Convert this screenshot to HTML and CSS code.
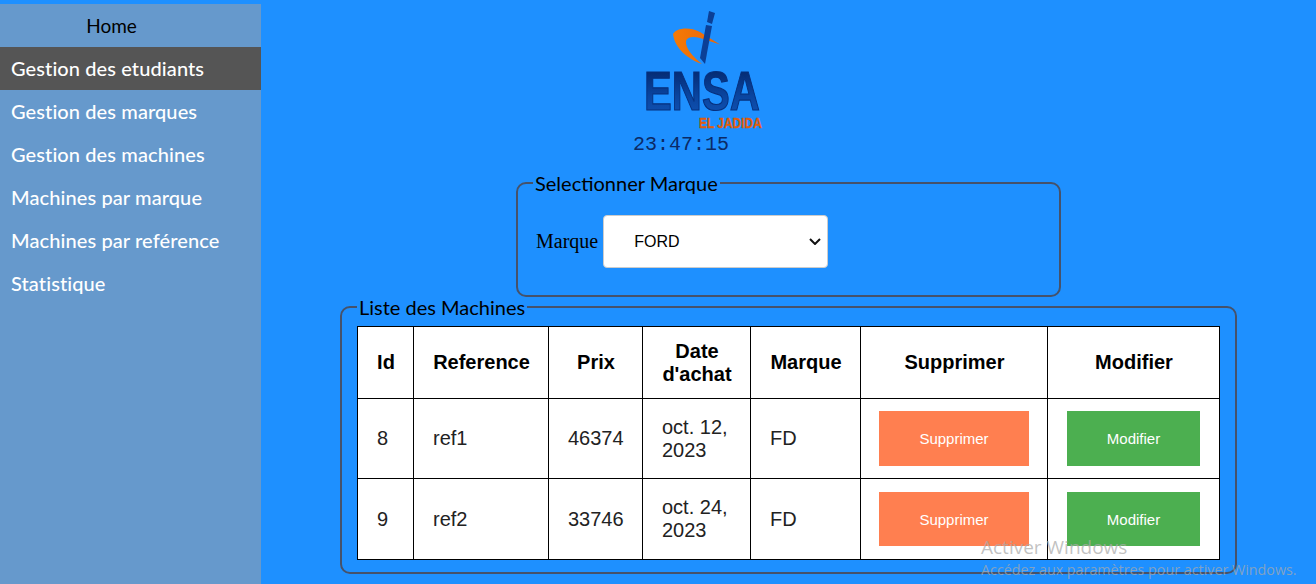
FILE: index.html
```html
<!DOCTYPE html>
<html lang="fr">
<head>
<meta charset="utf-8">
<title>Gestion des machines</title>
<link rel="stylesheet" href="styles.css">
</head>
<body>
<div class="page">
  <nav class="sidebar">
    <a class="home" href="#">Home</a>
    <a class="item active" href="#">Gestion des etudiants</a>
    <a class="item" href="#">Gestion des marques</a>
    <a class="item" href="#">Gestion des machines</a>
    <a class="item" href="#">Machines par marque</a>
    <a class="item" href="#">Machines par reférence</a>
    <a class="item" href="#">Statistique</a>
  </nav>
  <main class="main">
    <header class="brand">
      <svg class="logo" width="130" height="124" viewBox="0 0 130 124" aria-label="ENSA El Jadida">
        <defs>
          <linearGradient id="blue" x1="0" y1="0" x2="0" y2="1">
            <stop offset="0.15" stop-color="#04296f"/>
            <stop offset="0.6" stop-color="#0a45a0"/>
            <stop offset="0.85" stop-color="#0f4fae"/>
          </linearGradient>
          <linearGradient id="swoosh" x1="0" y1="0" x2="1" y2="0">
            <stop offset="0" stop-color="#f47a06"/>
            <stop offset="1" stop-color="#e8660a"/>
          </linearGradient>
        </defs>
        <path class="swoosh" d="M33 27 C36 21 49 19 60 25 L80 37.500 L60 31 C53 29 47 30 46 34 C45 41 53 50 62 57 C48 52 35 42 33 27 Z"/>
        <path class="stem" d="M69 4 L75 6 L72 17 L67 15 Z"/>
        <path class="stem" d="M66 18 L72 19 L65 57 L60 51 Z"/>
        <text class="ensa" transform="translate(4,103) scale(.745,1)">ENSA</text>
        <text class="city" transform="translate(59,121) scale(.77,1)">EL JADIDA</text>
      </svg>
      <div class="clock">23:47:15</div>
    </header>

    <fieldset class="box box-select">
      <legend>Selectionner Marque</legend>
      <div class="select-row">
        <label class="select-label" for="marque">Marque</label>
        <select class="select" id="marque">
          <option>FORD</option>
        </select>
      </div>
    </fieldset>

    <fieldset class="box box-list">
      <legend>Liste des Machines</legend>
      <table class="table">
        <colgroup>
          <col class="c-id"><col class="c-ref"><col class="c-prix"><col class="c-date"><col class="c-marque"><col class="c-sup"><col class="c-mod">
        </colgroup>
        <thead>
          <tr class="head-row">
            <th>Id</th><th>Reference</th><th>Prix</th><th>Date d'achat</th><th>Marque</th><th>Supprimer</th><th>Modifier</th>
          </tr>
        </thead>
        <tbody>
          <tr>
            <td>8</td><td>ref1</td><td>46374</td><td>oct. 12, 2023</td><td>FD</td>
            <td class="act"><button class="btn btn-del">Supprimer</button></td>
            <td class="act"><button class="btn btn-mod">Modifier</button></td>
          </tr>
          <tr class="last-row">
            <td>9</td><td>ref2</td><td>33746</td><td>oct. 24, 2023</td><td>FD</td>
            <td class="act"><button class="btn btn-del">Supprimer</button></td>
            <td class="act"><button class="btn btn-mod">Modifier</button></td>
          </tr>
        </tbody>
      </table>
    </fieldset>
  </main>
</div>
<div class="watermark">
  <div class="wm-title">Activer Windows</div>
  <div class="wm-sub">Accédez aux paramètres pour activer Windows.</div>
</div>
</body>
</html>
```
FILE: styles.css
```css
* { box-sizing: border-box; }
html, body { margin: 0; height: 100%; overflow: hidden; }
body { background: #1e90ff; color: #000; font-family: "Liberation Sans", Arial, sans-serif; }
.page { display: flex; height: 584px; padding-top: 4px; }

.sidebar { width: 261px; flex: none; background: #6699cc; margin-bottom: -4px; display: flex; flex-direction: column; font-family: "Lato", "Open Sans", sans-serif; }
.home { height: 43px; display: flex; align-items: center; justify-content: center; padding-right: 38px; font-size: 19px; color: #000; text-decoration: none; }
.item { height: 43px; display: flex; align-items: center; padding: 0 0 2px 11px; font-size: 20px; font-weight: 500; letter-spacing: .1px; color: #fff; text-decoration: none; }
.item.active { background: #555; }

.main { flex: 1; display: flex; flex-direction: column; align-items: center; }
.brand { width: 100%; height: 168px; padding: 3px 0 0 372px; }
.logo { display: block; margin-left: 7px; }
.swoosh { fill: url(#swoosh); }
.stem { fill: #0b3f96; }
.ensa { font: bold 56px "Liberation Sans", Arial, sans-serif; fill: url(#blue); stroke: #06307e; stroke-width: 1.200px; }
.city { font: bold 15.500px "Liberation Sans", Arial, sans-serif; fill: #e8620c; stroke: #c9500a; stroke-width: .4px; }
.clock { font: 20px/20px "Liberation Mono", "Courier New", monospace; color: #0b2a66; margin-top: 4px; }

.box { margin: 0; border: 2px solid #46526a; border-radius: 10px; padding: 0; min-width: 0; }
.box legend { font: 20px/22px "Lato", "Open Sans", sans-serif; padding: 0 2px; margin-left: 15px; }
.box-select { width: 545px; height: 125px; }
.box-list { width: 897px; height: 278px; margin-top: -1px; padding: 8px 15px 0; }
.box-list legend { margin-left: 0; }

.select-row { display: flex; align-items: center; gap: 5px; padding: 21px 0 0 18px; }
.select-label { font: 20px "Liberation Serif", "Times New Roman", serif; }
.select {
  width: 225px; height: 53px; padding: 0 26px 0 30px;
  appearance: none;
  background: #fff url("data:image/svg+xml,%3Csvg xmlns='http://www.w3.org/2000/svg' width='12' height='7'%3E%3Cpath d='M1 1l5 5 5-5' fill='none' stroke='%23111' stroke-width='2'/%3E%3C/svg%3E") no-repeat right 6px center;
  border: 1px solid #ccc; border-radius: 4px;
  font: 16px "Liberation Sans", Arial, sans-serif; color: #000;
}

.table { width: 862px; border-collapse: collapse; background: #fff; table-layout: fixed; font-size: 20px; }
.c-id { width: 56px; } .c-ref { width: 135px; } .c-prix { width: 94px; } .c-date { width: 108px; }
.c-marque { width: 110px; } .c-sup { width: 187px; } .c-mod { width: 172px; }
.table th, .table td { border: 1px solid #000; padding: 12px 18px 12px 19px; line-height: 23px; }
.table th { text-align: center; font-weight: bold; }
.table td { text-align: left; color: #222; }
.head-row { height: 72px; }
.table .act { text-align: center; padding-left: 0; padding-right: 0; }
.table .last-row td { padding-top: 13px; padding-bottom: 13px; }
.btn { height: 55px; border: 0; color: #fff; font: 15px "Liberation Sans", Arial, sans-serif; display: block; margin: 0 auto; }
.last-row .btn { height: 54px; }
.btn-del { width: 150px; background: #ff7f50; }
.btn-mod { width: 133px; background: #4caf50; }

.watermark { position: absolute; left: 981px; top: 535px; color: rgba(170,170,170,.72); font-family: "Open Sans", "Noto Sans", sans-serif; white-space: nowrap; pointer-events: none; }
.wm-title { font-size: 19px; line-height: 24px; }
.wm-sub { font-size: 14.300px; line-height: 20px; margin-top: 1px; }
```
